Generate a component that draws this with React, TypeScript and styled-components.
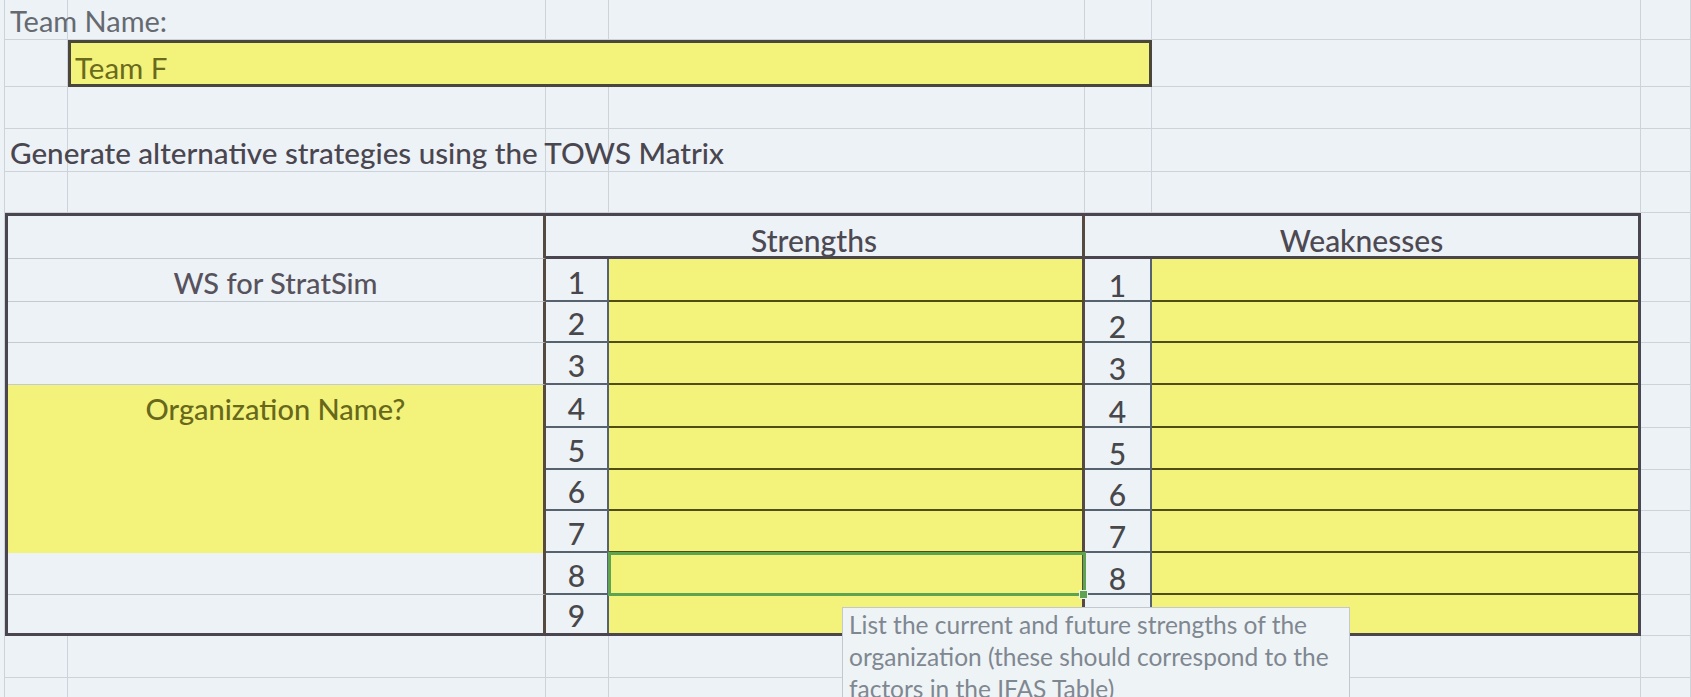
import React from "react";
import styled, { createGlobalStyle } from "styled-components";

const BG = "#edf2f6";
const GRID = "#cdd3d8";
const YELLOW = "#f3f37c";
const FRAME = "#4b4550";
const DIVIDER = "#56493f";
const NUMLINE = "#56636f";
const ROWLINE = "#4f4c14";
const SELECT = "#5ea34f";

const GlobalStyle = createGlobalStyle`
  html, body {
    margin: 0;
    padding: 0;
    background: ${BG};
    overflow: hidden;
  }
  body {
    font-family: Lato, "Open Sans", sans-serif;
  }
`;

const COLS = [63, 478, 63, 476, 67, 489];
const ROWS = [40, 47, 42, 43, 41, 46, 43, 41, 42, 43, 42, 41, 42, 42, 41, 42, 42];
const MATRIX_ROWS = [43, 43, 41, 42, 43, 42, 41, 42, 42, 38];

const Sheet = styled.div`
  position: relative;
  margin-left: 4px;
  height: 697px;
  overflow: hidden;
  display: grid;
  grid-template-columns: ${COLS.map((c) => `${c}px`).join(" ")} 1fr;
  grid-template-rows: ${ROWS.map((r) => `${r}px`).join(" ")};
  border-left: 1px solid ${GRID};
  box-sizing: border-box;
`;

const GridCell = styled.div<{ $r: number; $c: number }>`
  grid-row: ${(p) => p.$r};
  grid-column: ${(p) => p.$c};
  border-right: 1px solid ${GRID};
  border-bottom: 1px solid ${GRID};
`;

const SheetText = styled.div<{ $row: number; $cols: string; $tone: "light" | "dark" }>`
  grid-row: ${(p) => p.$row};
  grid-column: ${(p) => p.$cols};
  z-index: 1;
  display: flex;
  align-items: flex-end;
  padding: 0 0 5px 5px;
  font-size: ${(p) => (p.$tone === "light" ? "29px" : "29.6px")};
  line-height: 29px;
  white-space: nowrap;
  font-weight: ${(p) => (p.$tone === "light" ? 400 : 500)};
  color: ${(p) => (p.$tone === "light" ? "#656a71" : "#4a4650")};
`;

const TeamBox = styled.div`
  grid-row: 2;
  grid-column: 2 / 6;
  z-index: 1;
  box-sizing: border-box;
  border: 3px solid #4a463c;
  background: ${YELLOW};
  display: flex;
  align-items: flex-end;
  padding: 0 0 2px 4px;
  font-size: 29.5px;
  line-height: 29px;
  color: #6a6a1c;
`;

const Matrix = styled.div`
  grid-row: 6 / 16;
  grid-column: 1 / 7;
  z-index: 1;
  box-sizing: border-box;
  border: 3px solid ${FRAME};
  background: ${BG};
  display: grid;
  grid-template-columns: 538px 63px 476px 67px 486px;
  grid-template-rows: ${MATRIX_ROWS.map((r) => `${r}px`).join(" ")};
  font-size: 29px;
  line-height: 29px;
`;

const Label = styled.div<{ $fill?: boolean; $span?: number; $last?: boolean; $top?: boolean }>`
  grid-column: 1;
  grid-row: span ${(p) => p.$span ?? 1};
  box-sizing: border-box;
  background: ${(p) => (p.$fill ? YELLOW : BG)};
  border-right: 3px solid ${DIVIDER};
  border-bottom: ${(p) => (p.$last || p.$fill ? "none" : `1px solid #c3cad0`)};
  display: flex;
  justify-content: center;
  align-items: ${(p) => (p.$top ? "flex-start" : "flex-end")};
  padding: ${(p) => (p.$top ? "9px 0 0 0" : "0 0 4px 0")};
  white-space: nowrap;
  font-weight: 500;
  color: ${(p) => (p.$fill ? "#68681a" : "#57525d")};
`;

const Header = styled.div<{ $divider?: boolean }>`
  grid-row: 1;
  box-sizing: border-box;
  border-bottom: 3px solid ${FRAME};
  border-right: ${(p) => (p.$divider ? `3px solid ${DIVIDER}` : "none")};
  display: flex;
  justify-content: center;
  align-items: flex-end;
  padding-bottom: 1px;
  font-size: 30px;
  font-weight: 500;
  color: #4d4953;
`;

const NumCell = styled.div<{ $last?: boolean; $low?: boolean }>`
  box-sizing: border-box;
  background: ${BG};
  border-right: 2px solid ${NUMLINE};
  border-bottom: ${(p) => (p.$last ? "none" : `2px solid ${NUMLINE}`)};
  display: flex;
  justify-content: center;
  align-items: flex-end;
  padding-bottom: ${(p) => (p.$low ? "0" : "3px")};
  font-size: 30px;
  font-weight: 500;
  color: #48474b;
`;

const InputCell = styled.div<{ $last?: boolean; $divider?: boolean; $selected?: boolean }>`
  position: relative;
  box-sizing: border-box;
  background: ${YELLOW};
  border-bottom: ${(p) => (p.$last ? "none" : `2px solid ${ROWLINE}`)};
  border-right: ${(p) => (p.$divider ? `3px solid ${DIVIDER}` : "none")};
  outline: ${(p) => (p.$selected ? `3px solid ${SELECT}` : "none")};
  outline-offset: -2px;
  z-index: ${(p) => (p.$selected ? 2 : "auto")};

  &::after {
    content: "";
    display: ${(p) => (p.$selected ? "block" : "none")};
    position: absolute;
    right: -6px;
    bottom: -6px;
    width: 7px;
    height: 7px;
    background: ${SELECT};
    border: 1px solid ${BG};
  }
`;

const Tooltip = styled.div`
  position: absolute;
  left: 837px;
  top: 607px;
  width: 508px;
  height: 130px;
  box-sizing: border-box;
  background: #eef3f6;
  border: 1px solid #c2c8cd;
  padding: 1px 0 0 6px;
  z-index: 5;
  font-size: 24.5px;
  line-height: 32px;
  color: #7f8791;
`;

const TipLine = styled.span`
  display: block;
  white-space: nowrap;
`;

const rows = [1, 2, 3, 4, 5, 6, 7, 8, 9];

export default function App() {
  const gridCells: React.ReactNode[] = [];
  for (let r = 1; r <= ROWS.length; r++) {
    for (let c = 1; c <= COLS.length + 1; c++) {
      gridCells.push(<GridCell key={`${r}-${c}`} $r={r} $c={c} />);
    }
  }

  return (
    <>
      <GlobalStyle />
      <Sheet>
        {gridCells}
        <SheetText $row={1} $cols="1 / 3" $tone="light">
          Team Name:
        </SheetText>
        <TeamBox>Team F</TeamBox>
        <SheetText $row={4} $cols="1 / 6" $tone="dark">
          Generate alternative strategies using the TOWS Matrix
        </SheetText>

        <Matrix>
          <Label />
          <Header $divider style={{ gridColumn: "2 / 4" }}>Strengths</Header>
          <Header style={{ gridColumn: "4 / 6" }}>Weaknesses</Header>

          {rows.map((n) => {
            const last = n === 9;
            let label: React.ReactNode = null;
            if (n === 1) label = <Label>WS for StratSim</Label>;
            else if (n === 2 || n === 3 || n === 8) label = <Label />;
            else if (n === 4)
              label = (
                <Label $fill $span={4} $top>
                  Organization Name?
                </Label>
              );
            else if (n === 9) label = <Label $last />;
            return (
              <React.Fragment key={n}>
                {label}
                <NumCell $last={last} style={{ gridColumn: 2, gridRow: n + 1 }}>
                  {n}
                </NumCell>
                <InputCell
                  $last={last}
                  $divider
                  $selected={n === 8}
                  style={{ gridColumn: 3, gridRow: n + 1 }}
                />
                <NumCell $last={last} $low style={{ gridColumn: 4, gridRow: n + 1 }}>
                  {n}
                </NumCell>
                <InputCell $last={last} style={{ gridColumn: 5, gridRow: n + 1 }} />
              </React.Fragment>
            );
          })}
        </Matrix>

        <Tooltip>
          <TipLine>List the current and future strengths of the</TipLine>
          <TipLine>organization (these should correspond to the</TipLine>
          <TipLine>factors in the IFAS Table)</TipLine>
        </Tooltip>
      </Sheet>
    </>
  );
}
